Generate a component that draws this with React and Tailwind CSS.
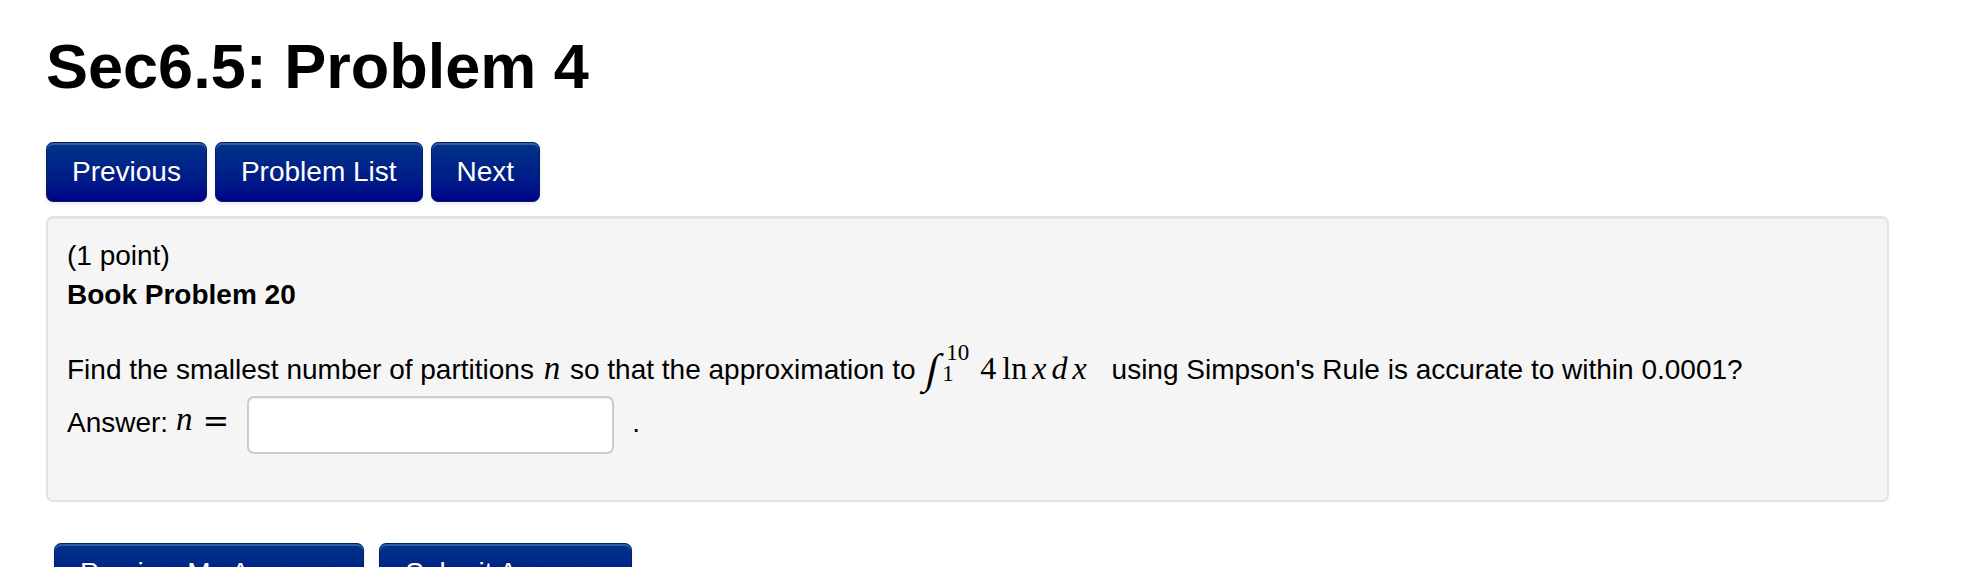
import React from 'react';

const btn =
  "h-[60px] shrink-0 rounded-[7px] border border-[#00205f] bg-linear-to-b from-[#003388] to-[#000088] px-[25px] text-[28px] leading-none text-white shadow-[inset_0_2px_0_rgba(255,255,255,0.2),0_2px_4px_rgba(0,0,0,0.08)] [text-shadow:0_-1px_0_rgba(0,0,0,0.25)]";

function MathN({ className = "mx-[2px]" }) {
  return <span className={className + " font-['Liberation_Serif',serif] text-[33px] italic leading-[0]"}>n</span>;
}

function Integral() {
  // \int_1^{10} 4 \ln x dx
  return (
    <span className="font-['Liberation_Serif',serif] text-[32px] leading-[0]">
      <span className="relative ml-[4px] inline-block w-[53px] leading-[0]">
        <span className="relative top-[4px] inline-block origin-bottom skew-x-[-12deg] text-[42px] leading-[0]">∫</span>
        <span className="absolute left-[19px] top-[-23px] text-[23px] leading-[22px]">10</span>
        <span className="absolute left-[15px] top-[-2px] text-[23px] leading-[22px]">1</span>
      </span>
      <span>4</span>
      <span className="ml-[6px]">ln</span>
      <span className="ml-[5px] italic tracking-[5px]">xdx</span>
    </span>
  );
}

export default function App() {
  return (
    <div className="min-h-screen bg-white pl-[46px] font-['Liberation_Sans',Arial,sans-serif] text-black">
      <h1 className="pt-[32px] text-[63px] font-bold leading-[68px]">Sec6.5: Problem 4</h1>

      <div className="mt-[42px] flex gap-2">
        <button className={btn}>Previous</button>
        <button className={btn}>Problem List</button>
        <button className={btn}>Next</button>
      </div>

      <div className="mt-[14px] h-[286px] w-[1843px] rounded-[7px] border-2 border-[#e3e3e3] bg-[#f5f5f5] px-[19px] pt-[18px] text-[28px] leading-[39px] shadow-[inset_0_1px_1px_rgba(0,0,0,0.05)]">
        <div>(1 point)</div>
        <div className="font-bold">Book Problem 20</div>

        <p className="mt-[36px] h-[39px] whitespace-nowrap">
          Find the smallest number of partitions <MathN /> so that the approximation to <Integral />
          <span className="ml-[20px]">using Simpson's Rule is accurate to within 0.0001?</span>
        </p>

        <div className="mt-[7px] flex items-start">
          <span className="mt-[7px]">Answer:&nbsp;</span>
          <span className="mt-[5px]"><MathN className="" /></span>
          <span className="mt-[6px] ml-[10px] font-['DejaVu_Serif',serif] text-[32px]">=</span>
          <input
            type="text"
            className="ml-[18px] h-[58px] w-[367px] rounded-[7px] border-2 border-[#cccccc] bg-white px-3 text-[28px] shadow-[inset_0_1px_1px_rgba(0,0,0,0.075)] outline-none"
          />
          <span className="mt-[7px] ml-[18px]">.</span>
        </div>
      </div>

      <div className="ml-[8px] mt-[41px] flex gap-[15px]">
        <button className={btn}>Preview My Answers</button>
        <button className={btn}>Submit Answers</button>
      </div>
    </div>
  );
}
